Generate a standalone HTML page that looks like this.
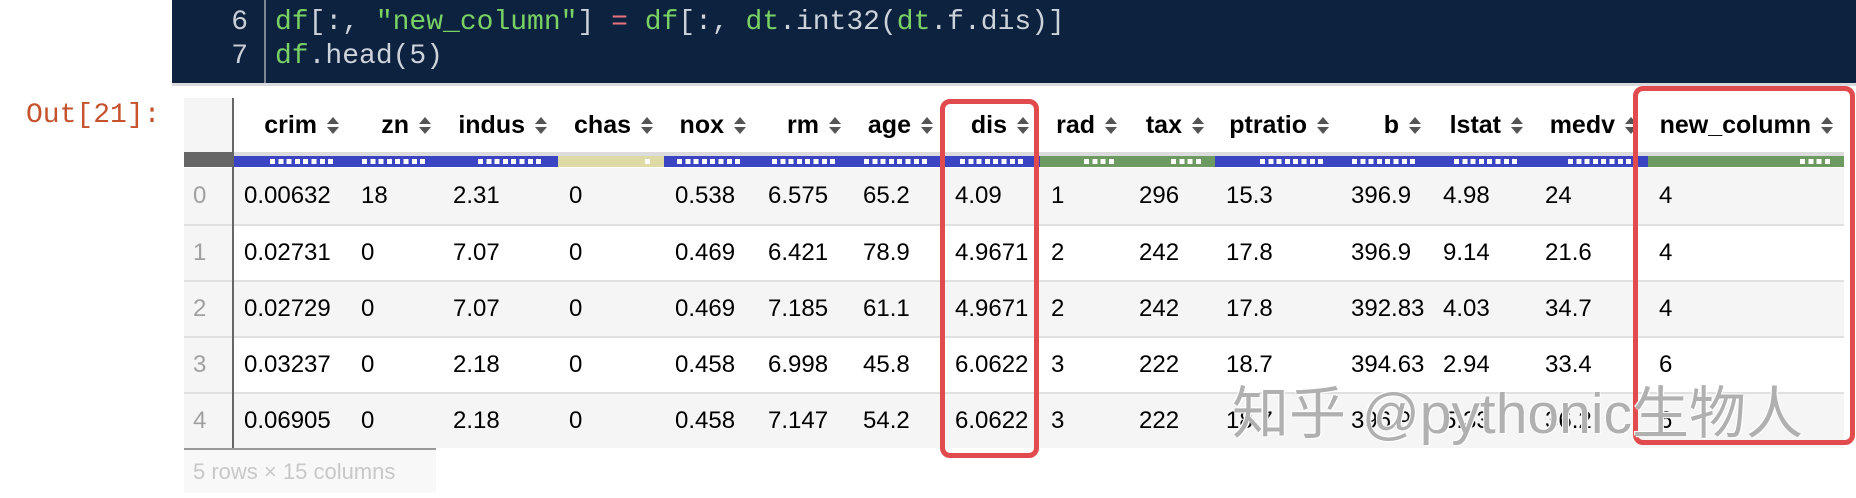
<!DOCTYPE html>
<html><head><meta charset="utf-8"><style>
*{margin:0;padding:0;box-sizing:border-box}
body{width:1856px;height:498px;background:#fff;position:relative;overflow:hidden;font-family:"Liberation Sans",Arial,sans-serif}
.code{position:absolute;left:172px;top:0;width:1684px;background:#0c223f;border-bottom:3px solid #d8dadd;height:86px}
.gut{position:absolute;left:264px;top:0;width:2px;height:83px;background:#7c8794}
.ln{position:absolute;left:200px;width:48px;text-align:right;font:28px/33px "Liberation Mono",monospace;color:#c9cfd6}
.cl{position:absolute;left:275px;font:28px/33px "Liberation Mono",monospace;color:#cdd3da;white-space:pre}
.g{color:#79d263}.r{color:#e8747c}
.out{position:absolute;left:26px;top:99px;font:28px/33px "Liberation Mono",monospace;color:#c4532e}
.row{position:absolute;left:184px;display:flex;height:56px;align-items:center;font-size:24px;color:#000}
.row>div{height:100%;display:flex;align-items:center;padding-left:11px;white-space:nowrap}
.row>div.ix{color:#a0a0a0;padding-left:9px}
.hd{position:absolute;left:184px;top:98px;display:flex;height:54px;align-items:center;font-size:25px;font-weight:bold;color:#000}
.hd>div{height:100%;display:flex;align-items:center;justify-content:flex-end;padding-right:11px;white-space:nowrap}
.ar{display:inline-block;width:12px;height:17px;margin-left:10px;position:relative}
.ar:before,.ar:after{content:"";position:absolute;left:0;border-left:6px solid transparent;border-right:6px solid transparent}
.ar:before{top:0;border-bottom:7px solid #555}
.ar:after{bottom:0;border-top:7px solid #555}
.bar{position:absolute;left:184px;top:152px;display:flex;height:15px;background:#dcdcdc}
.bar>div{height:11px;margin-top:4px;position:relative}
.bar>div i{position:absolute;top:3px;height:5px;right:14px;background:repeating-linear-gradient(to right,#fff 0 5px,transparent 5px 8.3px)}
.B{background:#3b45c3}.Y{background:#dedaa5}.G{background:#6d9a61}
.box{position:absolute;border:5px solid #e14b4d;border-radius:10px}
</style></head><body>
<div class="code"></div>
<div class="gut"></div>
<div class="ln" style="top:6px">6</div>
<div class="ln" style="top:40px">7</div>
<div class="cl" style="top:6px"><span class="g">df</span>[:, <span class="g">"new_column"</span>] <span class="r">=</span> <span class="g">df</span>[:, <span class="g">dt</span>.int32(<span class="g">dt</span>.f.dis)]</div>
<div class="cl" style="top:40px"><span class="g">df</span>.head(5)</div>
<div class="out">Out[21]:</div>

<div style="position:absolute;left:184px;top:98px;width:49px;height:55px;background:#f5f5f5"></div>
<div class="hd">
<div style="width:49px"></div>
<div style="width:117px">crim<span class="ar"></span></div>
<div style="width:92px">zn<span class="ar"></span></div>
<div style="width:116px">indus<span class="ar"></span></div>
<div style="width:106px">chas<span class="ar"></span></div>
<div style="width:93px">nox<span class="ar"></span></div>
<div style="width:95px">rm<span class="ar"></span></div>
<div style="width:92px">age<span class="ar"></span></div>
<div style="width:96px">dis<span class="ar"></span></div>
<div style="width:88px">rad<span class="ar"></span></div>
<div style="width:87px">tax<span class="ar"></span></div>
<div style="width:125px">ptratio<span class="ar"></span></div>
<div style="width:92px">b<span class="ar"></span></div>
<div style="width:102px">lstat<span class="ar"></span></div>
<div style="width:114px">medv<span class="ar"></span></div>
<div style="width:196px">new_column<span class="ar"></span></div>
</div>

<div class="bar">
<div style="width:49px;background:#666;height:15px;margin-top:0"></div>
<div class="B" style="width:117px"><i style="width:66px"></i></div>
<div class="B" style="width:92px"><i style="width:66px"></i></div>
<div class="B" style="width:116px"><i style="width:66px"></i></div>
<div class="Y" style="width:106px"><i style="width:5px"></i></div>
<div class="B" style="width:93px"><i style="width:66px"></i></div>
<div class="B" style="width:95px"><i style="width:66px"></i></div>
<div class="B" style="width:92px"><i style="width:66px"></i></div>
<div class="B" style="width:96px"><i style="width:66px"></i></div>
<div class="G" style="width:88px"><i style="width:30px"></i></div>
<div class="G" style="width:87px"><i style="width:30px"></i></div>
<div class="B" style="width:125px"><i style="width:66px"></i></div>
<div class="B" style="width:92px"><i style="width:66px"></i></div>
<div class="B" style="width:102px"><i style="width:66px"></i></div>
<div class="B" style="width:114px"><i style="width:66px"></i></div>
<div class="G" style="width:196px"><i style="width:30px"></i></div>
</div>

<div class="row" style="top:168px;background:#f5f5f5"><div class="ix" style="width:49px">0</div><div style="width:117px">0.00632</div><div style="width:92px">18</div><div style="width:116px">2.31</div><div style="width:106px">0</div><div style="width:93px">0.538</div><div style="width:95px">6.575</div><div style="width:92px">65.2</div><div style="width:96px">4.09</div><div style="width:88px">1</div><div style="width:87px">296</div><div style="width:125px">15.3</div><div style="width:92px">396.9</div><div style="width:102px">4.98</div><div style="width:114px">24</div><div style="width:196px">4</div></div>
<div class="row" style="top:224px;background:#fff;border-top:2px solid #e0e0e0"><div class="ix" style="width:49px;background:#f5f5f5">1</div><div style="width:117px">0.02731</div><div style="width:92px">0</div><div style="width:116px">7.07</div><div style="width:106px">0</div><div style="width:93px">0.469</div><div style="width:95px">6.421</div><div style="width:92px">78.9</div><div style="width:96px">4.9671</div><div style="width:88px">2</div><div style="width:87px">242</div><div style="width:125px">17.8</div><div style="width:92px">396.9</div><div style="width:102px">9.14</div><div style="width:114px">21.6</div><div style="width:196px">4</div></div>
<div class="row" style="top:280px;background:#f5f5f5;border-top:2px solid #e0e0e0"><div class="ix" style="width:49px">2</div><div style="width:117px">0.02729</div><div style="width:92px">0</div><div style="width:116px">7.07</div><div style="width:106px">0</div><div style="width:93px">0.469</div><div style="width:95px">7.185</div><div style="width:92px">61.1</div><div style="width:96px">4.9671</div><div style="width:88px">2</div><div style="width:87px">242</div><div style="width:125px">17.8</div><div style="width:92px">392.83</div><div style="width:102px">4.03</div><div style="width:114px">34.7</div><div style="width:196px">4</div></div>
<div class="row" style="top:336px;background:#fff;border-top:2px solid #e0e0e0"><div class="ix" style="width:49px;background:#f5f5f5">3</div><div style="width:117px">0.03237</div><div style="width:92px">0</div><div style="width:116px">2.18</div><div style="width:106px">0</div><div style="width:93px">0.458</div><div style="width:95px">6.998</div><div style="width:92px">45.8</div><div style="width:96px">6.0622</div><div style="width:88px">3</div><div style="width:87px">222</div><div style="width:125px">18.7</div><div style="width:92px">394.63</div><div style="width:102px">2.94</div><div style="width:114px">33.4</div><div style="width:196px">6</div></div>
<div class="row" style="top:392px;background:#f5f5f5;border-top:2px solid #e0e0e0"><div class="ix" style="width:49px">4</div><div style="width:117px">0.06905</div><div style="width:92px">0</div><div style="width:116px">2.18</div><div style="width:106px">0</div><div style="width:93px">0.458</div><div style="width:95px">7.147</div><div style="width:92px">54.2</div><div style="width:96px">6.0622</div><div style="width:88px">3</div><div style="width:87px">222</div><div style="width:125px">18.7</div><div style="width:92px">396.9</div><div style="width:102px">5.33</div><div style="width:114px">36.2</div><div style="width:196px">6</div></div>

<div style="position:absolute;left:232px;top:98px;width:2px;height:350px;background:#666"></div>
<div style="position:absolute;left:184px;top:448px;width:252px;height:2px;background:#999"></div>
<div style="position:absolute;left:184px;top:450px;width:252px;height:43px;background:#f8f8f8;color:#c8c8c8;font-size:22px;line-height:43px;padding-left:9px">5 rows × 15 columns</div>

<div class="box" style="left:940px;top:99px;width:99px;height:359px"></div>
<div class="box" style="left:1633px;top:86px;width:222px;height:359px"></div>

<div style="position:absolute;left:1232px;top:384px;font-family:'Liberation Sans','Noto Sans CJK SC',sans-serif;font-size:57px;line-height:60px;color:rgba(150,150,150,0.75);text-shadow:0 0 2px #fff,1px 1px 0 #fff,-1px -1px 0 #fff;white-space:nowrap">知乎 @pythonic生物人</div>
</body></html>
